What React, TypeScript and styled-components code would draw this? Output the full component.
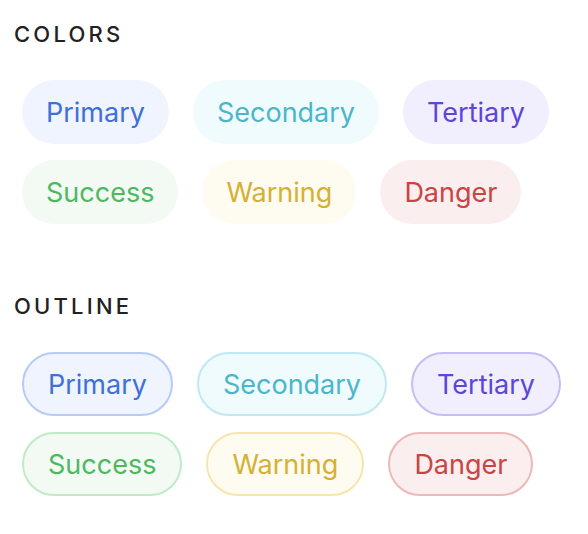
import React from 'react'
import styled, { createGlobalStyle } from 'styled-components'

const GlobalStyle = createGlobalStyle`
    body {
        margin: 0;
        background: #fff;
        font-family: Inter, "Noto Sans", sans-serif;
    }
`

type Tone = 'primary' | 'secondary' | 'tertiary' | 'success' | 'warning' | 'danger'

const tones: Record<Tone, { text: string; bg: string; border: string }> = {
    primary: { text: '#3f6fd9', bg: '#eff4fe', border: '#b6cbf6' },
    secondary: { text: '#4bb6c9', bg: '#f0fbfd', border: '#bfe9f2' },
    tertiary: { text: '#5c45d9', bg: '#f1effd', border: '#c6bcf6' },
    success: { text: '#4db95f', bg: '#f2faf3', border: '#c0ebc6' },
    warning: { text: '#d5b034', bg: '#fefcf0', border: '#f6e5ac' },
    danger: { text: '#c94444', bg: '#fbeeee', border: '#ecb8b8' },
}

const Page = styled.div`
    width: 588px;
`

const Section = styled.section`
    padding-bottom: 48px;

    &:last-child {
        padding-bottom: 0;
    }
`

const Header = styled.h2`
    margin: 0;
    padding: 21px 0 0 14px;
    height: 80px;
    box-sizing: border-box;
    font-size: 22px;
    line-height: 26px;
    font-weight: 500;
    letter-spacing: 3.2px;
    color: #222;
`

const Chips = styled.div`
    display: flex;
    flex-wrap: wrap;
    gap: 16px 24px;
    padding: 0 0 0 22px;
`

const Chip = styled.div<{ $tone: Tone; $outline?: boolean }>`
    display: inline-flex;
    align-items: center;
    height: 64px;
    box-sizing: border-box;
    padding: 0 24px;
    border-radius: 32px;
    font-size: 27px;
    color: ${(p) => tones[p.$tone].text};
    background: ${(p) => tones[p.$tone].bg};
    border: ${(p) => (p.$outline ? `2px solid ${tones[p.$tone].border}` : 'none')};
`

const names: [Tone, string][] = [
    ['primary', 'Primary'],
    ['secondary', 'Secondary'],
    ['tertiary', 'Tertiary'],
    ['success', 'Success'],
    ['warning', 'Warning'],
    ['danger', 'Danger'],
]

export default () => (
    <Page>
        <GlobalStyle />
        <Section>
            <Header>COLORS</Header>
            <Chips>
                {names.map(([tone, label]) => (
                    <Chip key={tone} $tone={tone}>{label}</Chip>
                ))}
            </Chips>
        </Section>
        <Section>
            <Header>OUTLINE</Header>
            <Chips>
                {names.map(([tone, label]) => (
                    <Chip key={tone} $tone={tone} $outline>{label}</Chip>
                ))}
            </Chips>
        </Section>
    </Page>
)
